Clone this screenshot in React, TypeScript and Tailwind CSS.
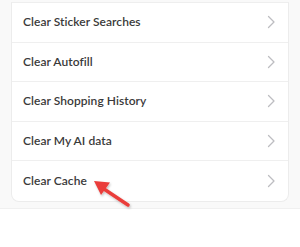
import React from "react";

const items = [
  "Clear Sticker Searches",
  "Clear Autofill",
  "Clear Shopping History",
  "Clear My AI data",
  "Clear Cache",
];

function Chevron() {
  return (
    <svg width="9" height="14" viewBox="0 0 9 14" className="shrink-0">
      <path d="M1.5 1.5 L7 7 L1.5 12.5" fill="none" stroke="#bdbdc1" strokeWidth="1.3" strokeLinecap="round" strokeLinejoin="round" />
    </svg>
  );
}

export default function App() {
  return (
    <div className="relative w-[300px] h-[247px] bg-white overflow-hidden" style={{ fontFamily: "Lato, 'Open Sans', sans-serif" }}>
      <div className="bg-[#f9f9f9] pt-[2px] pb-[6px] px-[11px] border-b border-[#f0f0f0]">
        <div className="bg-white border border-[#ececec] border-t-[#eeeeee] rounded-b-[8px]">
          {items.map((t, i) => (
            <div
              key={t}
              className={`flex items-center justify-between h-[39.5px] pl-[11px] pr-[12px] ${i < items.length - 1 ? "border-b border-[#efefef]" : ""}`}
            >
              <span className="text-[12px] font-semibold text-[#3a3a3a] tracking-[0.05px]">{t}</span>
              <Chevron />
            </div>
          ))}
        </div>
      </div>
      <svg className="absolute left-0 top-0 pointer-events-none" width="300" height="247" viewBox="0 0 300 247">
        <defs>
          <filter id="sh" x="-20%" y="-20%" width="140%" height="140%">
            <feDropShadow dx="1" dy="1.5" stdDeviation="1" floodColor="#000" floodOpacity="0.25" />
          </filter>
        </defs>
        <g filter="url(#sh)">
          <line x1="128" y1="205" x2="104" y2="189" stroke="#ea3e3a" strokeWidth="3.5" strokeLinecap="round" />
          <polygon points="94,181 110,182.5 101,195" fill="#ea3e3a" />
        </g>
      </svg>
    </div>
  );
}
